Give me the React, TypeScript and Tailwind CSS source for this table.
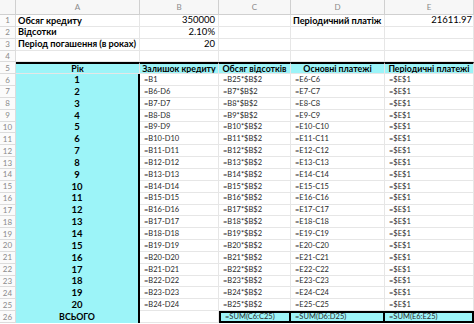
import React from "react";

const cols = ["A", "B", "C", "D", "E"];

export default function App() {
  const rowsData = Array.from({ length: 20 }, (_, i) => {
    const r = i + 6;
    return {
      n: r,
      a: String(i + 1),
      b: r === 6 ? "=B1" : `=B${r - 1}-D${r - 1}`,
      c: r === 6 ? "=B25*$B$2" : `=B${r}*$B$2`,
      d: `=E${r}-C${r}`,
      e: "=$E$1",
    };
  });

  const num = "flex items-center justify-center text-[8px] text-[#8a8a8a] border-r border-b border-[#dcdcdc] bg-[#fbfbfb]";
  const cell = "flex items-center border-r border-b border-[#e6e6e6] overflow-hidden whitespace-nowrap";
  const cyan = "bg-[#9cf4f8]";
  const f = "text-[7.5px] text-[#2a2a2a] pl-[4px]";
  const lbl = "pl-[2px] text-[9.2px] font-bold";
  const hdr = "justify-center text-[8.8px] font-bold border-t-2 border-t-black";

  return (
    <div
      className="w-[474px] h-[324px] overflow-hidden bg-white text-black"
      style={{ fontFamily: 'Lato, "Noto Sans", sans-serif' }}
    >
      <div className="grid grid-cols-[16px_124px_79px_72px_94px_89px] grid-rows-[15px_repeat(26,11.85px)]">
        {/* header row */}
        <div className="border-r border-b border-[#d0d0d0] bg-[#f7f7f7]" />
        {cols.map((c) => (
          <div key={c} className="flex items-center justify-center text-[8px] text-[#8a8a8a] border-r border-b border-[#d0d0d0] bg-[#f7f7f7]">
            {c}
          </div>
        ))}

        {/* row 1 */}
        <div className={num}>1</div>
        <div className={`${cell} ${lbl}`}>Обсяг кредиту</div>
        <div className={`${cell} justify-end pr-[3px] text-[9.5px]`}>350000</div>
        <div className={cell} />
        <div className={`${cell} ${lbl}`}>Періодичний платіж</div>
        <div className={`${cell} justify-end pr-[1px] text-[9.5px]`}>21611.97</div>

        {/* row 2 */}
        <div className={num}>2</div>
        <div className={`${cell} ${lbl}`}>Відсотки</div>
        <div className={`${cell} justify-end pr-[3px] text-[9.5px]`}>2.10%</div>
        <div className={cell} />
        <div className={cell} />
        <div className={cell} />

        {/* row 3 */}
        <div className={num}>3</div>
        <div className={`${cell} ${lbl}`}>Період погашення (в роках)</div>
        <div className={`${cell} justify-end pr-[3px] text-[9.5px]`}>20</div>
        <div className={cell} />
        <div className={cell} />
        <div className={cell} />

        {/* row 4 */}
        <div className={num}>4</div>
        <div className={cell} />
        <div className={cell} />
        <div className={cell} />
        <div className={cell} />
        <div className={cell} />

        {/* row 5 */}
        <div className={num}>5</div>
        <div className={`${cell} ${cyan} ${hdr}`}>Рік</div>
        <div className={`${cell} ${cyan} ${hdr}`}>Залишок кредиту</div>
        <div className={`${cell} ${cyan} ${hdr}`}>Обсяг відсотків</div>
        <div className={`${cell} ${cyan} ${hdr}`}>Основні платежі</div>
        <div className={`${cell} ${cyan} ${hdr}`}>Періодичні платежі</div>

        {rowsData.map((r) => (
          <React.Fragment key={r.n}>
            <div className={num}>{r.n}</div>
            <div className={`flex items-center justify-center ${cyan} border-r-2 border-r-black text-[9.5px] font-bold`}>{r.a}</div>
            <div className={`${cell} ${f}`}>{r.b}</div>
            <div className={`${cell} ${f}`}>{r.c}</div>
            <div className={`${cell} ${f}`}>{r.d}</div>
            <div className={`${cell} ${f}`}>{r.e}</div>
          </React.Fragment>
        ))}

        {/* row 26 */}
        <div className={num}>26</div>
        <div className={`flex items-center justify-center ${cyan} border-r-2 border-r-black text-[8.8px] font-bold`}>ВСЬОГО</div>
        <div className={`${cell}`} />
        <div className={`flex items-center ${cyan} border-2 border-black ${f} whitespace-nowrap`}>=SUM(C6:C25)</div>
        <div className={`flex items-center ${cyan} border-2 border-l-0 border-black ${f} whitespace-nowrap`}>=SUM(D6:D25)</div>
        <div className={`flex items-center ${cyan} border-2 border-l-0 border-black ${f} whitespace-nowrap`}>=SUM(E6:E25)</div>
      </div>
    </div>
  );
}
